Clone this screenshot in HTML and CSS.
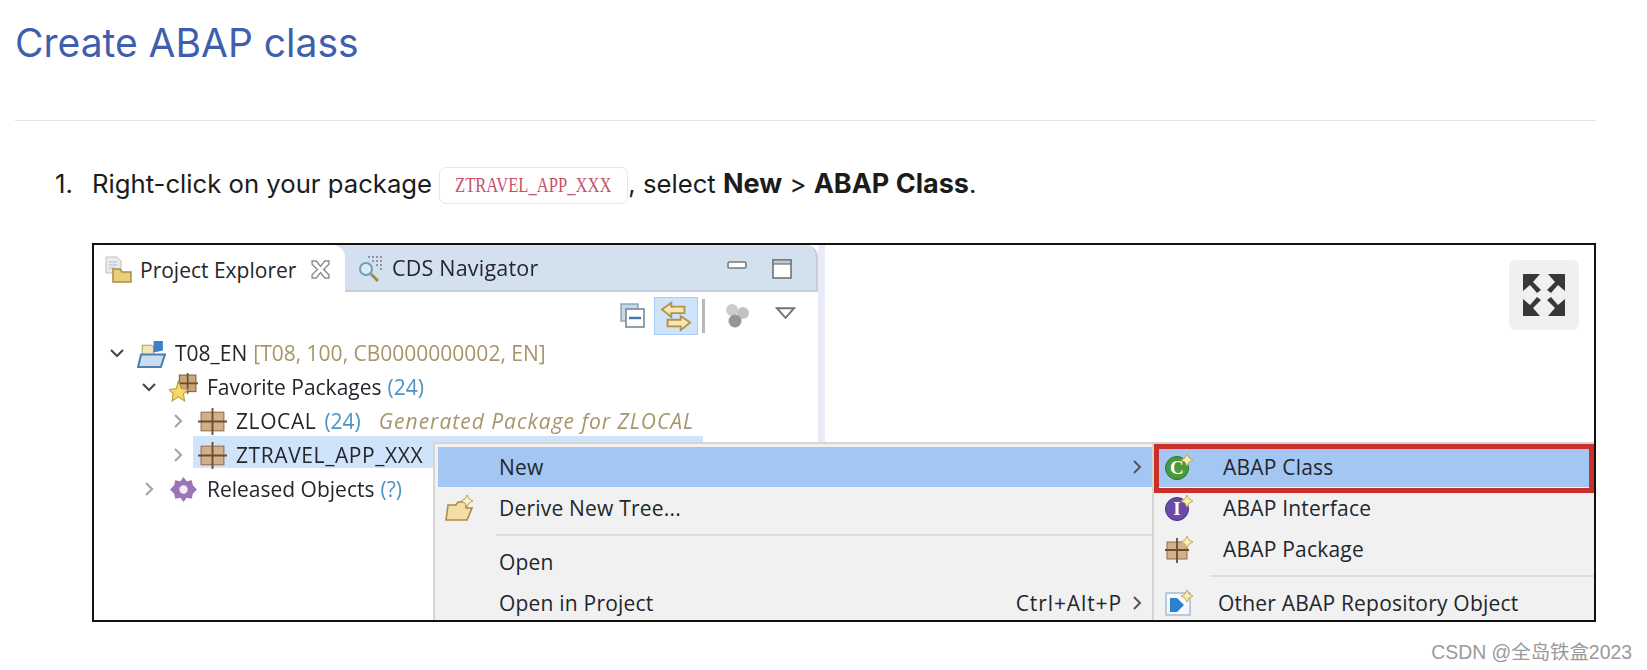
FILE: index.html
```html
<!DOCTYPE html>
<html lang="en">
<head>
<meta charset="utf-8">
<title>Create ABAP class</title>
<link rel="stylesheet" href="styles.css">
</head>
<body>
<h1 class="title">Create ABAP class</h1>
<hr class="rule">
<ol class="steps">
  <li>Right-click on your package <code class="pill"><span>ZTRAVEL_APP_XXX</span></code>, select <b>New</b> &gt; <b>ABAP Class</b>.</li>
</ol>
<div class="shot">
  <div class="soft">
    <section class="view">
      <div class="tabs">
        <div class="tab active">
          <svg class="ic" viewBox="0 0 28 28"><path d="M2 1h11l4 4v12H2z" fill="#e8ecf2" stroke="#c4bfb2"/><path d="M5 6h8M5 9h8M5 12h6" stroke="#a9bfd6"/><path d="M9 13h7l2 3h9v10H9z" fill="#eccd78" stroke="#a98a4e" stroke-width="1.5"/></svg>
          <span>Project Explorer</span>
          <svg class="close" viewBox="0 0 20 20"><path d="M2 2l4 0 4 5 4-5 4 0 0 3-5 5 5 5 0 3-4 0-4-5-4 5-4 0 0-3 5-5-5-5z" fill="#fff" stroke="#8d8d8d" stroke-width="1.4"/></svg>
        </div>
        <div class="tab second">
          <svg class="ic" viewBox="0 0 28 28"><path d="M12 2h2v2h-2zM16 2h2v2h-2zM20 2h2v2h-2zM24 2h2v2h-2zM16 6h2v2h-2zM20 6h2v2h-2zM24 6h2v2h-2zM20 10h2v2h-2zM24 10h2v2h-2zM24 14h2v2h-2z" fill="#8c96a3"/><circle cx="10" cy="15" r="6" fill="#dbeaf5" stroke="#6d9dbb" stroke-width="2"/><path d="M15 20l7 7" stroke="#a98850" stroke-width="3"/></svg>
          <span>CDS Navigator</span>
        </div>
        <div class="winbtns">
          <svg class="winbtn" viewBox="0 0 20 20"><rect x="1" y="3" width="18" height="6" rx="1.5" fill="#fff" stroke="#767a80" stroke-width="1.6"/></svg>
          <svg class="winbtn" viewBox="0 0 20 20"><rect x="1" y="1" width="18" height="18" fill="#fff" stroke="#6e7278" stroke-width="1.6"/><rect x="1" y="1" width="18" height="4" fill="#c5c9ce" stroke="#6e7278" stroke-width="1.2"/></svg>
        </div>
      </div>
      <div class="toolbar">
        <svg class="tool" viewBox="0 0 26 26"><rect x="1" y="1" width="17" height="17" fill="#c7d7e5" stroke="#8ba3b5" stroke-width="1.4"/><rect x="6" y="6" width="18" height="18" fill="#fff" stroke="#76889a" stroke-width="1.6"/><path d="M9 15h12" stroke="#3f78a8" stroke-width="2.4"/></svg>
        <div class="toggled">
          <svg viewBox="0 0 34 34"><path d="M2 10l10-7v4h14v7H12v4z" fill="#f5e6b4" stroke="#b4924a" stroke-width="2"/><path d="M32 24L22 17v4H8v7h14v4z" fill="#f5e6b4" stroke="#b4924a" stroke-width="2"/></svg>
        </div>
        <i class="toolsep"></i>
        <svg class="tool balls" viewBox="0 0 26 26"><circle cx="8" cy="7" r="6" fill="#cdcdcd"/><circle cx="19" cy="10" r="6" fill="#c2c2c2"/><circle cx="11" cy="18" r="6.5" fill="#969696"/></svg>
        <svg class="tool tri" viewBox="0 0 22 14"><path d="M2 2h18l-9 10z" fill="#fff" stroke="#6f7479" stroke-width="2"/></svg>
      </div>
      <ul class="tree">
        <li class="row lvl0">
          <svg class="arrow" viewBox="0 0 16 16"><path d="M2 5l6 6 6-6" fill="none" stroke="#4a4a4a" stroke-width="2.2"/></svg>
          <svg class="ic" viewBox="0 0 28 28"><path d="M5 6h9l2 2v10H5z" fill="#f3e5b8" stroke="#b49d63"/><path d="M16 2h9v9l-9 2z" fill="#3f81c9"/><path d="M1 27l3-12h23l-4 12z" fill="#c9dcf0" stroke="#4d7eb5" stroke-width="2"/></svg>
          <span class="name">T08_EN</span><span class="deco">[T08, 100, CB0000000002, EN]</span>
        </li>
        <li class="row lvl1">
          <svg class="arrow" viewBox="0 0 16 16"><path d="M2 5l6 6 6-6" fill="none" stroke="#4a4a4a" stroke-width="2.2"/></svg>
          <svg class="ic" viewBox="0 0 28 28"><rect x="10" y="2" width="16" height="16" fill="#caa57a" stroke="#7d5c3a"/><path d="M18 0v20M8 10h20" stroke="#6d4c30" stroke-width="1.6"/><path d="M9 8l3 7 7 1-5 4 1 7-6-4-6 4 1-7-4-4 7-1z" fill="#f5d868" stroke="#b49a3e"/></svg>
          <span class="name">Favorite Packages</span><span class="count">(24)</span>
        </li>
        <li class="row lvl2">
          <svg class="arrow" viewBox="0 0 16 16"><path d="M5 2l6 6-6 6" fill="none" stroke="#a6a6a6" stroke-width="2.2"/></svg>
          <svg class="ic" viewBox="0 0 28 28"><rect x="3" y="5" width="22" height="18" fill="#d2b08a" stroke="#8f6b48"/><path d="M14 1v26M0 14h28" stroke="#6d4c30" stroke-width="1.8"/></svg>
          <span class="name wide">ZLOCAL</span><span class="count">(24)</span><em class="hint">Generated Package for ZLOCAL</em>
        </li>
        <li class="row lvl2 selected">
          <svg class="arrow" viewBox="0 0 16 16"><path d="M5 2l6 6-6 6" fill="none" stroke="#a6a6a6" stroke-width="2.2"/></svg>
          <svg class="ic" viewBox="0 0 28 28"><rect x="3" y="5" width="22" height="18" fill="#d2b08a" stroke="#8f6b48"/><path d="M14 1v26M0 14h28" stroke="#6d4c30" stroke-width="1.8"/></svg>
          <span class="name wide">ZTRAVEL_APP_XXX</span>
        </li>
        <li class="row lvl1">
          <svg class="arrow" viewBox="0 0 16 16"><path d="M5 2l6 6-6 6" fill="none" stroke="#a6a6a6" stroke-width="2.2"/></svg>
          <svg class="ic" viewBox="0 0 28 28"><path d="M14 2l3 4 5-1 1 5 4 4-4 4-1 5-5-1-3 4-3-4-5 1-1-5-4-4 4-4 1-5 5 1z" fill="#9c74b8"/><circle cx="14" cy="14" r="4" fill="#f3edf7"/></svg>
          <span class="name">Released Objects</span><span class="count">(?)</span>
        </li>
      </ul>
    </section>
    <div class="menu main">
      <div class="item hot"><span class="gut"></span><span class="label">New</span><svg class="chev" viewBox="0 0 30 16"><path d="M12 2l6 6-6 6" fill="none" stroke="#555" stroke-width="2"/></svg></div>
      <div class="item"><span class="gut"><svg class="ic" viewBox="0 0 28 28"><path d="M1 26l2-15h8l2-3h8v6h6l-5 12z" fill="#f5dea6" stroke="#ab8a4c" stroke-width="1.6"/><path d="M22 1l2 4 4 2-4 2-2 4-2-4-4-2 4-2z" fill="#fff6c8" stroke="#b9a14f"/></svg></span><span class="label">Derive New Tree...</span></div>
      <div class="sep"></div>
      <div class="item"><span class="gut"></span><span class="label">Open</span></div>
      <div class="item"><span class="gut"></span><span class="label">Open in Project</span><span class="keys">Ctrl+Alt+P</span><svg class="chev" viewBox="0 0 30 16"><path d="M12 2l6 6-6 6" fill="none" stroke="#555" stroke-width="2"/></svg></div>
    </div>
    <div class="menu sub">
      <div class="item hot"><span class="gut"><svg class="ic" viewBox="0 0 28 28"><circle cx="12" cy="15" r="11.5" fill="#4a9a3c" stroke="#2d7426"/><text x="12" y="21" text-anchor="middle" class="ictext">C</text><path d="M22 1l2 4 4 2-4 2-2 4-2-4-4-2 4-2z" fill="#f8efb0" stroke="#c2ab58"/></svg></span><span class="label">ABAP Class</span></div>
      <div class="item"><span class="gut"><svg class="ic" viewBox="0 0 28 28"><circle cx="12" cy="15" r="11.5" fill="#6a4aa8" stroke="#4b3286"/><text x="12" y="21" text-anchor="middle" class="ictext">I</text><path d="M22 1l2 4 4 2-4 2-2 4-2-4-4-2 4-2z" fill="#f8efb0" stroke="#c2ab58"/></svg></span><span class="label">ABAP Interface</span></div>
      <div class="item"><span class="gut"><svg class="ic" viewBox="0 0 28 28"><rect x="2" y="7" width="20" height="17" fill="#d2b08a" stroke="#8f6b48"/><path d="M12 3v25M0 15h24" stroke="#6d4c30" stroke-width="1.8"/><path d="M22 1l2 4 4 2-4 2-2 4-2-4-4-2 4-2z" fill="#f8efb0" stroke="#c2ab58"/></svg></span><span class="label">ABAP Package</span></div>
      <div class="sep"></div>
      <div class="item other"><span class="gut"><svg class="ic" viewBox="0 0 28 28"><rect x="1" y="4" width="24" height="22" fill="#f4f8fc" stroke="#a8bccf" stroke-width="1.5"/><path d="M5 9h7l7 7-7 7H5z" fill="#2f7fd0"/><path d="M22 1l2 4 4 2-4 2-2 4-2-4-4-2 4-2z" fill="#f8efb0" stroke="#c2ab58"/></svg></span><span class="label">Other ABAP Repository Object</span></div>
    </div>
    <div class="redbox"></div>
  </div>
  <button class="expand" aria-label="Expand image">
    <svg viewBox="0 0 42 42"><path d="M0 0h17l-7 8 8 8-4 3-7-8-7 6zM42 0H25l7 8-8 8 4 3 7-8 7 6zM0 42h17l-7-8 8-8-4-3-7 8-7-6zM42 42H25l7-8-8-8 4-3 7 8 7-6z" fill="#383838"/></svg>
  </button>
</div>
<footer class="mark">CSDN @全岛铁盒2023</footer>
</body>
</html>
```
FILE: styles.css
```css
* { box-sizing: border-box; }
html, body { margin: 0; height: 670px; overflow: hidden; background: #fff; }
body { position: relative; padding: 0 0 0 15px; font-family: "Inter", "Open Sans", sans-serif; color: #1c1c1c; }
.title { margin: 0; padding-top: 15px; height: 120px; font-size: 39px; line-height: 56px; font-weight: 400; color: #3f5fae; }
.rule { margin: 0; width: 1581px; border: 0; border-top: 1px solid #e2e2e2; }
.steps { margin: 0; padding: 43px 0 0 77px; font-size: 25.7px; line-height: 40px; height: 122px; list-style: none; }
.steps li { position: relative; }
.steps li::before { content: "1."; position: absolute; left: -37px; }
.steps b { font-size: 27px; font-weight: 700; }
.pill { display: inline-block; height: 37px; line-height: 34px; padding: 0 15px; vertical-align: 1px; font-family: "Liberation Serif", serif; font-size: 21px; color: #c94f68; background: #fff; border: 1px solid #e6e6e6; border-radius: 7px; }
.pill span { display: inline-block; transform: scaleX(.79); transform-origin: left; margin-right: -41px; }
.shot { position: relative; margin-left: 77px; width: 1504px; height: 379px; border: 2px solid #111; overflow: hidden; background: #fff; }
.soft { position: absolute; inset: 0; filter: blur(.55px); font-family: "Open Sans", "Noto Sans", sans-serif; font-size: 21px; color: #23262c; }
.view { width: 731px; height: 100%; padding-left: 1px; border-right: 7px solid #e9ebf7; }
.tabs { display: flex; height: 47px; background: #d3e0ee; border-radius: 12px 12px 0 0; border-bottom: 2px solid #c5cede; border-right: 2px solid #c8cdd6; }
.tab { display: flex; align-items: center; gap: 8px; padding: 0 10px 0 9px; white-space: nowrap; }
.tab.active { width: 250px; height: 49px; background: #fff; border-radius: 12px 12px 0 0; }
.tab.second { padding-left: 11px; font-size: 21.5px; letter-spacing: .2px; }
.tab .close { width: 21px; height: 21px; margin-left: 6px; flex: none; }
.ic { width: 28px; height: 28px; flex: none; }
.winbtns { margin-left: auto; display: flex; gap: 25px; padding: 14px 24px 0 0; }
.winbtn { width: 20px; height: 20px; }
.toolbar { display: flex; align-items: center; height: 38px; padding-left: 525px; margin-top: 5px; }
.tool { width: 26px; height: 26px; flex: none; }
.toggled { width: 44px; height: 38px; margin-left: 8px; padding: 2px 4px; background: #cde4fb; border: 1px solid #a8cdf2; flex: none; }
.toggled svg { width: 34px; height: 32px; display: block; }
.toolsep { width: 3px; height: 34px; margin: 0 19px 0 4px; background: #b5b9bd; }
.tri { width: 21px; height: 14px; margin: 0 0 7px 25px; }
.tree { list-style: none; margin: 0; padding: 1px 0 0; }
.row { position: relative; display: flex; align-items: center; height: 34px; white-space: nowrap; }
.row .ic { width: 29px; height: 29px; margin: 0 9px 0 12px; }
.row > * { position: relative; }
.arrow { width: 16px; height: 16px; flex: none; }
.lvl0 { padding-left: 14px; }
.lvl1 { padding-left: 46px; }
.lvl2 { padding-left: 75px; }
.wide { letter-spacing: .6px; }
.selected::before { content: ""; position: absolute; left: 98px; top: -2px; width: 510px; height: 32px; background: #cfe4fb; }
.deco { margin-left: 6px; color: #a8946a; }
.count { margin-left: 6px; color: #4d93c4; }
.wide + .count { margin-left: 8px; }
.hint { margin-left: 18px; color: #a8946a; letter-spacing: 1px; }
.menu { position: absolute; top: 197px; height: 182px; background: #f1f1f1; }
.main { left: 339px; width: 719px; border: solid #d5d5d5; border-width: 2px 0 0 2px; padding: 3px 0 0 3px; }
.sub { left: 1058px; width: 444px; border: solid #d5d5d5; border-width: 2px 0 0 2px; padding-top: 3px; }
.item { display: flex; align-items: center; height: 41px; white-space: nowrap; letter-spacing: .2px; }
.item.hot { height: 40px; background: #a3c6f2; }
.gut { width: 61px; padding-left: 7px; display: flex; flex: none; }
.sub .gut { width: 69px; padding-left: 11px; }
.sub .other .label { margin-left: -5px; }
.keys { margin-left: auto; letter-spacing: .9px; }
.chev { width: 30px; height: 16px; flex: none; margin-left: auto; }
.keys + .chev { margin-left: 0; }
.sep { height: 2px; margin: 6px 0 5px 58px; background: #dcdcdc; }
.sub .sep { margin-left: 56px; }
.ictext { font: 700 19px "Liberation Serif", serif; fill: #fff; }
.redbox { position: absolute; left: 1060px; top: 199px; width: 440px; height: 49px; border: 5px solid #c9302a; }
.expand { position: absolute; left: 1415px; top: 15px; width: 70px; height: 70px; padding: 14px; border: 0; border-radius: 7px; background: #f0f0f0; }
.expand svg { display: block; width: 42px; height: 42px; }
.mark { position: absolute; right: 15px; top: 640px; font-family: "Liberation Sans", "Noto Sans CJK SC", sans-serif; font-size: 19.4px; line-height: 24px; color: #9a9a9a; }
```
